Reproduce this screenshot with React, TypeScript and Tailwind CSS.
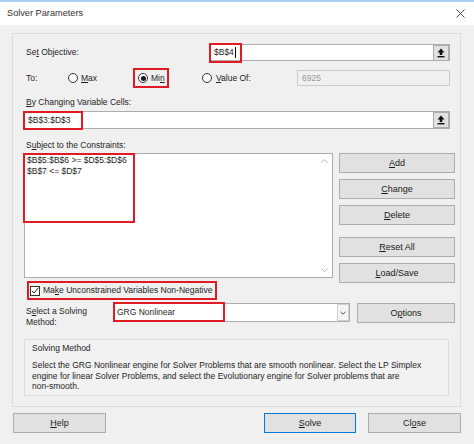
import React from "react";
import clsx from "clsx";

// Mnemonic underline, like a Windows dialog label
const U = ({ children }: { children: React.ReactNode }) => (
  <span className="underline underline-offset-[1px]">{children}</span>
);

const Btn = ({
  children,
  className,
}: {
  children: React.ReactNode;
  className?: string;
}) => (
  <div
    className={clsx(
      "flex items-center justify-center border bg-[#e1e1e1] text-[9px] text-[#1a1a1a]",
      className ?? "border-[#adadad]"
    )}
  >
    {children}
  </div>
);

const Radio = ({ checked }: { checked?: boolean }) => (
  <span className="flex h-[10px] w-[10px] shrink-0 items-center justify-center rounded-full border border-[#333] bg-white">
    {checked && <span className="h-[5px] w-[5px] rounded-full bg-[#1a1a1a]" />}
  </span>
);

const UploadIcon = () => (
  <span className="flex h-[16px] w-[16px] items-center justify-center border border-[#adadad] bg-[#e1e1e1]">
    <svg width="8" height="10" viewBox="0 0 8 10">
      <path d="M4 0.5 L7.5 4.5 H5.3 V7 H2.7 V4.5 H0.5 Z" fill="#111" />
      <rect x="0.5" y="8" width="7" height="1.4" fill="#111" />
    </svg>
  </span>
);

const RedBox = ({ className }: { className: string }) => (
  <div className={clsx("pointer-events-none absolute border-2 border-[#e01b24]", className)} />
);

export default function App() {
  return (
    <div className="h-[444px] w-[474px] overflow-hidden border-t-2 border-[#a9d1f3] bg-[#f0f0f0] font-['Liberation_Sans',Arial,sans-serif] text-[8.5px] leading-[11px] text-[#1e1e1e]">
      {/* title bar */}
      <div className="flex h-[23px] items-center justify-between bg-white pl-[7px] pr-[9px]">
        <span className="text-[9.2px] text-[#333]">Solver Parameters</span>
        <svg width="9" height="9" viewBox="0 0 9 9">
          <path d="M0.5 0.5 L8.5 8.5 M8.5 0.5 L0.5 8.5" stroke="#333" strokeWidth="0.9" />
        </svg>
      </div>

      {/* main panel */}
      <div className="ml-[12px] mt-[8px] flex h-[374px] w-[449px] flex-col border border-[#dcdcdc]">
        {/* set objective */}
        <div className="ml-[13px] mt-[9px] flex h-[19px] items-center">
          <span className="w-[183px]">
            Se<U>t</U> Objective:
          </span>
          <div className="relative flex h-[17px] w-[241px] items-center justify-between border border-[#adadad] bg-white pl-[4px]">
            <span className="flex items-center">
              $B$4<span className="ml-[1px] h-[11px] w-px bg-black" />
            </span>
            <UploadIcon />
            <RedBox className="-left-px -top-[2px] h-[20px] w-[33px]" />
          </div>
        </div>

        {/* to */}
        <div className="ml-[13px] mt-[6px] flex h-[20px] items-center">
          <span className="w-[42px]">To:</span>
          <div className="flex w-[65px] items-center gap-[3px]">
            <Radio />
            <span>
              <U>M</U>ax
            </span>
          </div>
          <div className="flex h-[20px] w-[36px] items-center gap-[3px] border-2 border-[#e01b24] pl-[3px]">
            <Radio checked />
            <span>
              Mi<U>n</U>
            </span>
          </div>
          <div className="ml-[33px] flex w-[95px] items-center gap-[4px]">
            <Radio />
            <span>
              <U>V</U>alue Of:
            </span>
          </div>
          <div className="flex h-[16px] w-[153px] items-center border border-[#cccccc] bg-[#f0f0f0] pl-[4px] text-[#9a9a9a]">
            6925
          </div>
        </div>

        {/* changing cells */}
        <div className="ml-[13px] mt-[9px] h-[12px]">
          <U>B</U>y Changing Variable Cells:
        </div>
        <div className="relative ml-[10px] mt-[2px] flex h-[18px] w-[427px] items-center justify-between border border-[#adadad] bg-white pl-[4px]">
          <span>$B$3:$D$3</span>
          <UploadIcon />
          <RedBox className="-left-px -top-px h-[19px] w-[60px]" />
        </div>

        {/* constraints */}
        <div className="ml-[13px] mt-[11px] h-[12px]">
          S<U>u</U>bject to the Constraints:
        </div>
        <div className="ml-[11px] mt-px flex h-[129px] items-start gap-[6px]">
          <div className="relative h-[125px] w-[309px] border border-[#adadad] bg-white pl-[2px] pt-[1px]">
            <div>$B$5:$B$6 &gt;= $D$5:$D$6</div>
            <div>$B$7 &lt;= $D$7</div>
            <svg className="absolute right-[4px] top-[5px]" width="7" height="4" viewBox="0 0 7 4">
              <path d="M0.5 3.5 L3.5 0.5 L6.5 3.5" stroke="#b5b5b5" fill="none" />
            </svg>
            <svg className="absolute bottom-[5px] right-[4px]" width="7" height="4" viewBox="0 0 7 4">
              <path d="M0.5 0.5 L3.5 3.5 L6.5 0.5" stroke="#b5b5b5" fill="none" />
            </svg>
            <RedBox className="-left-[2px] -top-px h-[70px] w-[112px]" />
          </div>
          <div className="flex w-[116px] flex-col">
            <Btn className="h-[20px] border-[#adadad]">
              <U>A</U>dd
            </Btn>
            <Btn className="mt-[6px] h-[20px] border-[#adadad]">
              <U>C</U>hange
            </Btn>
            <Btn className="mt-[6px] h-[20px] border-[#adadad]">
              <U>D</U>elete
            </Btn>
            <Btn className="mt-[12px] h-[20px] border-[#adadad]">
              <U>R</U>eset All
            </Btn>
            <Btn className="mt-[6px] h-[20px] border-[#adadad]">
              <U>L</U>oad/Save
            </Btn>
          </div>
        </div>

        {/* non-negative */}
        <div className="ml-[14px] -mt-px flex h-[19px] w-[190px] items-center gap-[3px] border-2 border-[#e01b24] pl-[1px]">
          <span className="flex h-[10px] w-[10px] items-center justify-center border border-[#333] bg-white">
            <svg width="8" height="7" viewBox="0 0 8 7">
              <path d="M0.8 3.8 L3 6 L7.3 0.8" stroke="#222" strokeWidth="1" fill="none" />
            </svg>
          </span>
          <span>
            Ma<U>k</U>e Unconstrained Variables Non-Negative
          </span>
        </div>

        {/* solving method select */}
        <div className="ml-[13px] mt-[3px] flex items-start">
          <div className="w-[87px] pt-[3px]">
            S<U>e</U>lect a Solving
            <br />
            Method:
          </div>
          <div className="relative flex h-[19px] w-[237px] items-center justify-between border border-[#adadad] bg-white pl-[3px]">
            <span>GRG Nonlinear</span>
            <span className="flex h-[17px] w-[12px] items-center justify-center border border-[#d0d0d0] bg-[#f4f4f4]">
              <svg width="6" height="4" viewBox="0 0 6 4">
                <path d="M0.5 0.8 L3 3.2 L5.5 0.8" stroke="#555" fill="none" />
              </svg>
            </span>
            <RedBox className="-left-px -top-[2px] h-[20px] w-[112px]" />
          </div>
          <Btn className="ml-[7px] h-[20px] w-[98px] border-[#adadad]">
            O<U>p</U>tions
          </Btn>
        </div>

        <div className="ml-[11px] mt-[11px] flex h-[57px] w-[425px] flex-col border border-[#dcdcdc] bg-[#f2f2f2] pl-[7px] pt-[3px]">
          <div className="h-[12px]">Solving Method</div>
          <div className="mt-[5px] whitespace-nowrap leading-[10.5px]">
            Select the GRG Nonlinear engine for Solver Problems that are smooth nonlinear. Select the LP Simplex
            <br />
            engine for linear Solver Problems, and select the Evolutionary engine for Solver problems that are
            <br />
            non-smooth.
          </div>
        </div>
      </div>

      {/* footer buttons */}
      <div className="mt-[6px] flex h-[20px] pl-[13px] pr-[13px]">
        <Btn className="w-[93px] border-[#adadad]">
          <U>H</U>elp
        </Btn>
        <Btn className="ml-auto w-[92px] border-[#0078d7]">
          <U>S</U>olve
        </Btn>
        <Btn className="ml-[12px] w-[93px] border-[#adadad]">
          Cl<U>o</U>se
        </Btn>
      </div>
    </div>
  );
}
